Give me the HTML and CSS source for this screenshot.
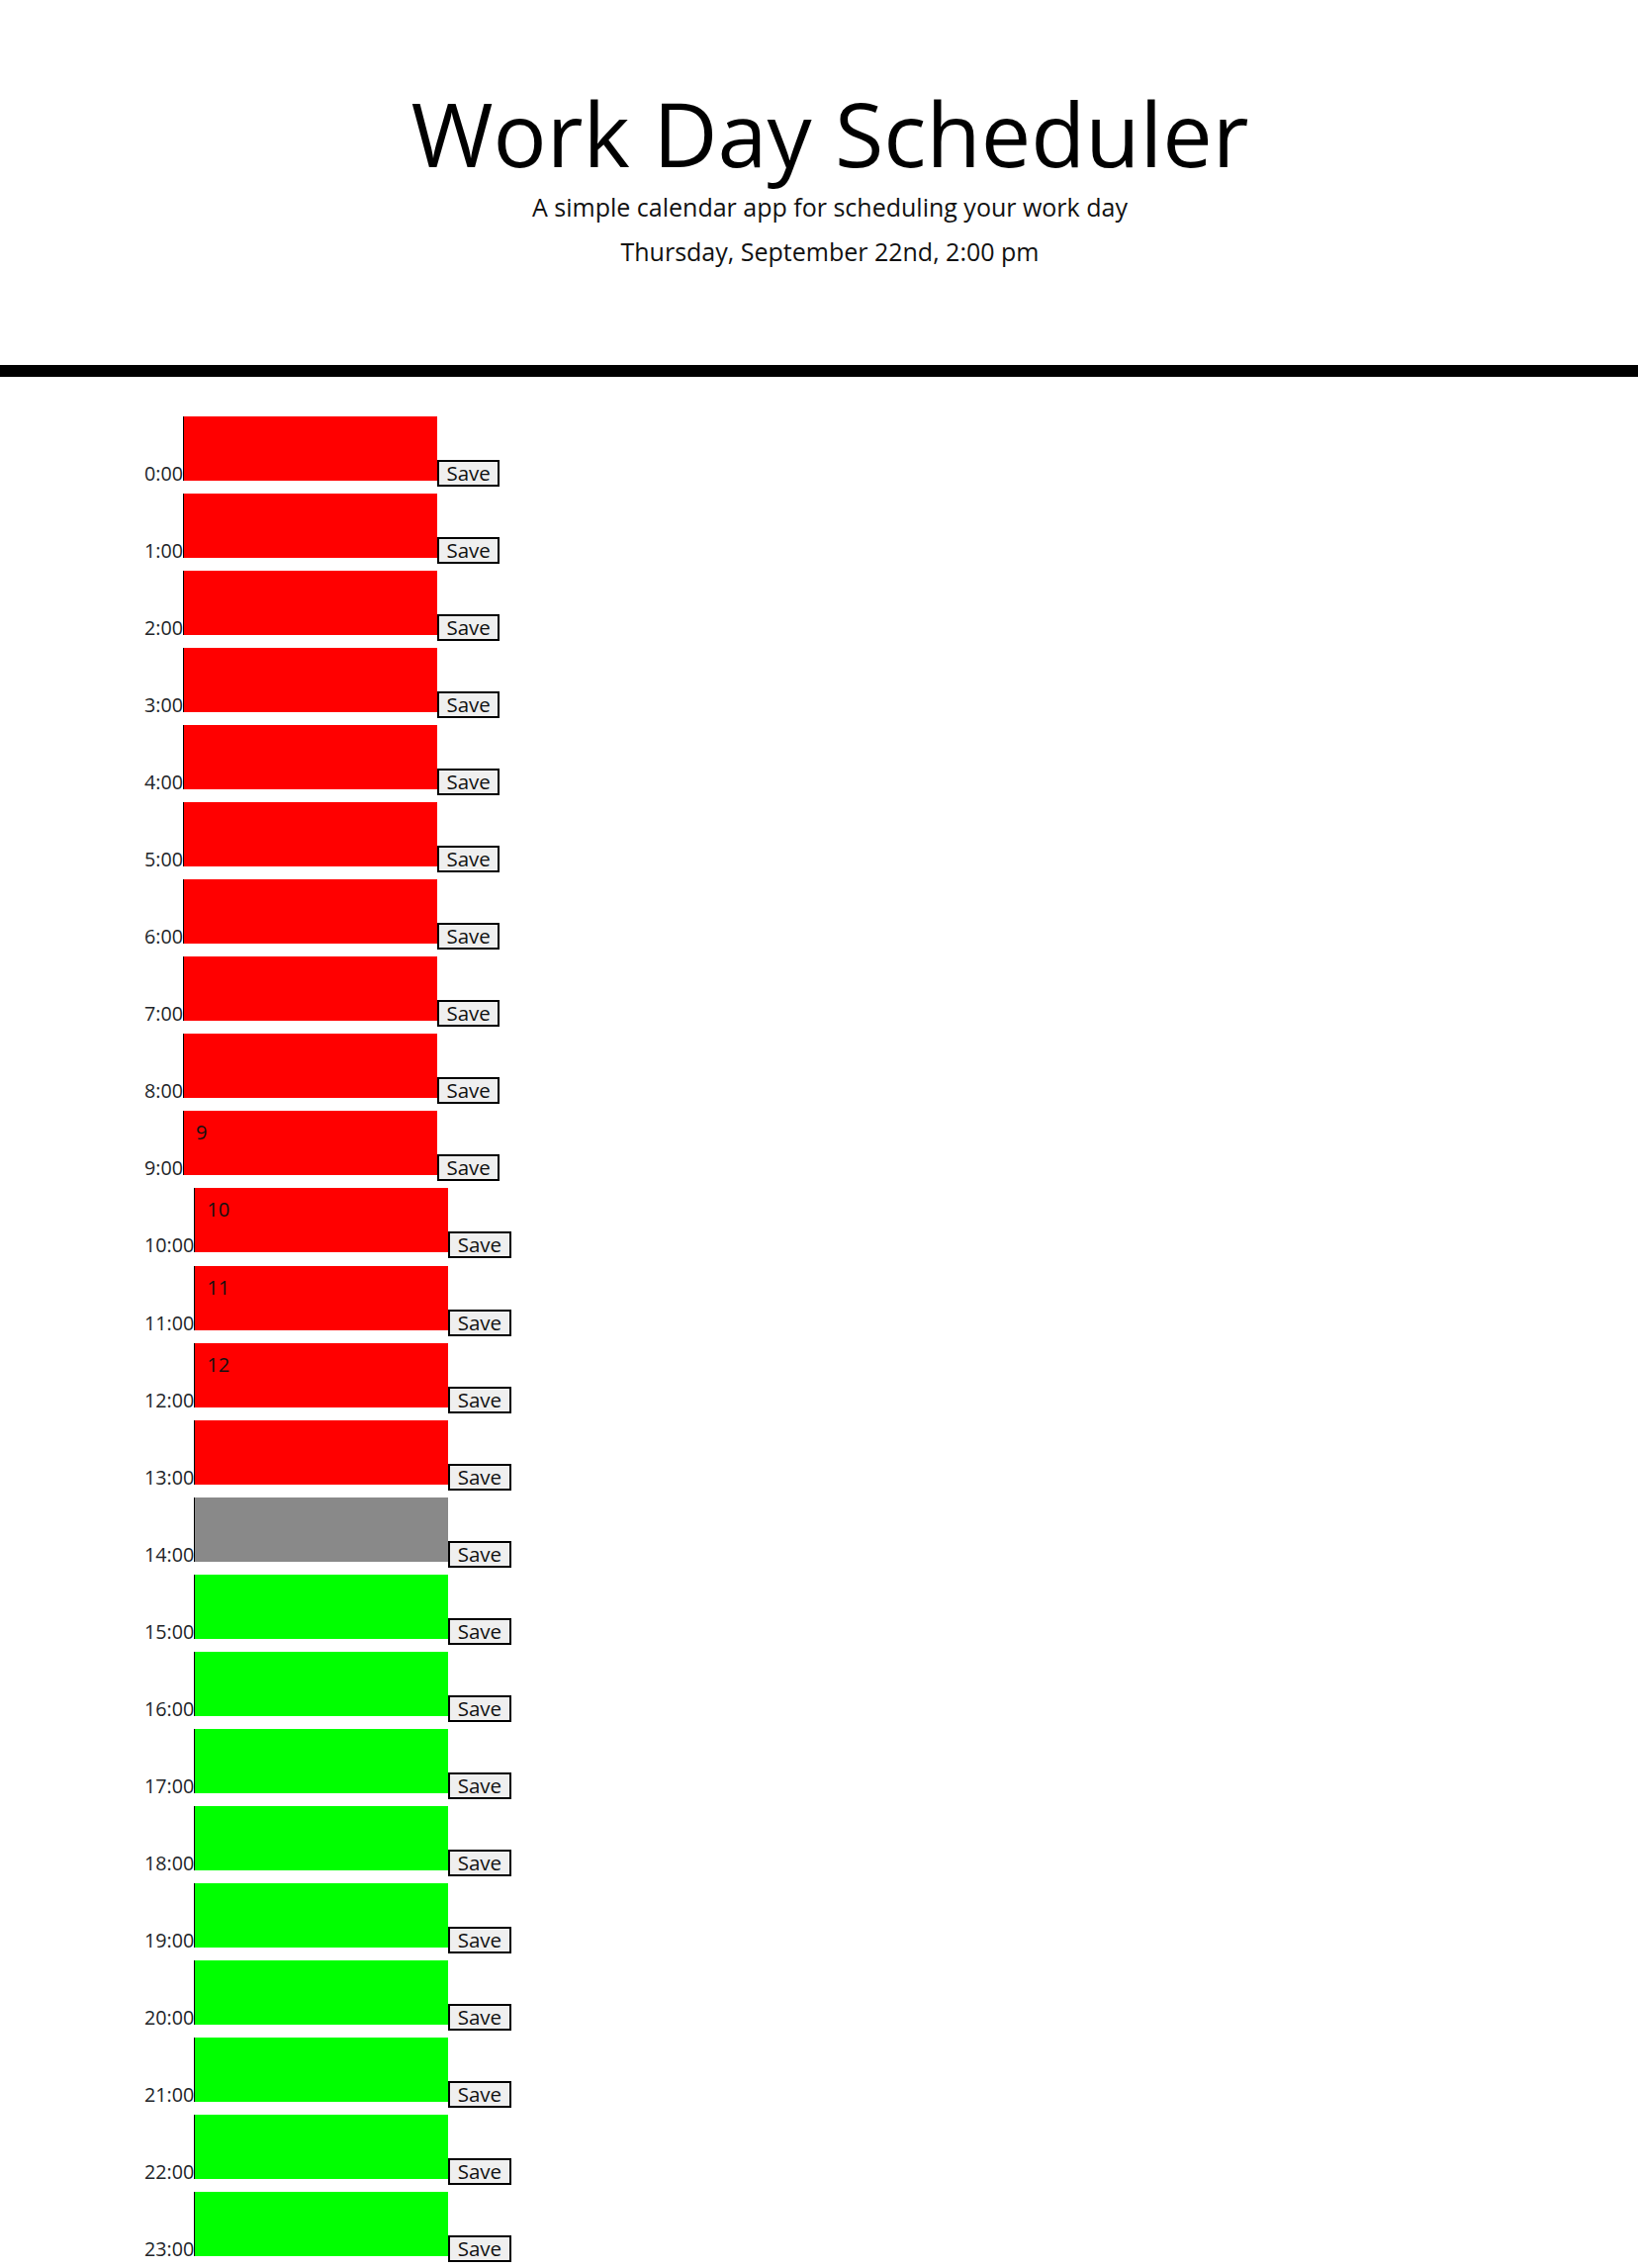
FILE: index.html
```html
<!DOCTYPE html>
<html lang="en">
<head>
<meta charset="utf-8">
<title>Work Day Scheduler</title>
<link rel="stylesheet" href="styles.css">
</head>
<body>
<header class="jumbo">
  <h1 class="title">Work Day Scheduler</h1>
  <p class="lead">A simple calendar app for scheduling your work day</p>
  <p class="today">Thursday, September 22nd, 2:00 pm</p>
</header>
<main class="hours">
  <div class="row"><span class="hour">0:00</span><textarea class="slot past"></textarea><button class="save">Save</button></div>
  <div class="row"><span class="hour">1:00</span><textarea class="slot past"></textarea><button class="save">Save</button></div>
  <div class="row"><span class="hour">2:00</span><textarea class="slot past"></textarea><button class="save">Save</button></div>
  <div class="row"><span class="hour">3:00</span><textarea class="slot past"></textarea><button class="save">Save</button></div>
  <div class="row"><span class="hour">4:00</span><textarea class="slot past"></textarea><button class="save">Save</button></div>
  <div class="row"><span class="hour">5:00</span><textarea class="slot past"></textarea><button class="save">Save</button></div>
  <div class="row"><span class="hour">6:00</span><textarea class="slot past"></textarea><button class="save">Save</button></div>
  <div class="row"><span class="hour">7:00</span><textarea class="slot past"></textarea><button class="save">Save</button></div>
  <div class="row"><span class="hour">8:00</span><textarea class="slot past"></textarea><button class="save">Save</button></div>
  <div class="row"><span class="hour">9:00</span><textarea class="slot past">9</textarea><button class="save">Save</button></div>
  <div class="row"><span class="hour">10:00</span><textarea class="slot past">10</textarea><button class="save">Save</button></div>
  <div class="row"><span class="hour">11:00</span><textarea class="slot past">11</textarea><button class="save">Save</button></div>
  <div class="row"><span class="hour">12:00</span><textarea class="slot past">12</textarea><button class="save">Save</button></div>
  <div class="row"><span class="hour">13:00</span><textarea class="slot past"></textarea><button class="save">Save</button></div>
  <div class="row"><span class="hour">14:00</span><textarea class="slot present"></textarea><button class="save">Save</button></div>
  <div class="row"><span class="hour">15:00</span><textarea class="slot future"></textarea><button class="save">Save</button></div>
  <div class="row"><span class="hour">16:00</span><textarea class="slot future"></textarea><button class="save">Save</button></div>
  <div class="row"><span class="hour">17:00</span><textarea class="slot future"></textarea><button class="save">Save</button></div>
  <div class="row"><span class="hour">18:00</span><textarea class="slot future"></textarea><button class="save">Save</button></div>
  <div class="row"><span class="hour">19:00</span><textarea class="slot future"></textarea><button class="save">Save</button></div>
  <div class="row"><span class="hour">20:00</span><textarea class="slot future"></textarea><button class="save">Save</button></div>
  <div class="row"><span class="hour">21:00</span><textarea class="slot future"></textarea><button class="save">Save</button></div>
  <div class="row"><span class="hour">22:00</span><textarea class="slot future"></textarea><button class="save">Save</button></div>
  <div class="row"><span class="hour">23:00</span><textarea class="slot future"></textarea><button class="save">Save</button></div>
</main>
</body>
</html>
```

FILE: styles.css
```css
html, body {
  margin: 0;
  padding: 0;
  background: #fff;
}

body {
  font-family: "Open Sans", "DejaVu Sans", sans-serif;
  color: #212529;
}

.jumbo {
  text-align: center;
  padding: 79px 0 96.7px 22px;
  border-bottom: 12px solid #000;
}

.title {
  margin: 0;
  font-size: 90px;
  font-weight: 400;
  line-height: 110px;
  color: #000;
}

.lead {
  margin: 2.3px 0 0;
  font-size: 25px;
  line-height: 36px;
  color: #111;
}

.today {
  margin: 9px 0 0;
  font-size: 25px;
  line-height: 36px;
  color: #111;
}

.hours {
  padding: 40px 0 0 146px;
}

.row {
  font-size: 19.7px;
  line-height: 23px;
  margin-bottom: 7.06px;
  white-space: nowrap;
}

.hour {
  color: #212529;
}

.slot {
  box-sizing: border-box;
  width: 257px;
  height: 65px;
  margin: 0;
  padding: 8px 12px;
  border: none;
  border-left: 1px solid #000;
  font-family: "Open Sans", "DejaVu Sans", sans-serif;
  font-size: 20px;
  line-height: 27px;
  color: #111;
  resize: none;
  overflow: hidden;
  vertical-align: baseline;
  outline: none;
}

.past {
  background: #ff0000;
}

.present {
  background: #898989;
}

.future {
  background: #00ff00;
}

.save {
  margin: 0;
  padding: 0 7.5px;
  border: 2px solid #000;
  background: #efefef;
  font-family: "Open Sans", "DejaVu Sans", sans-serif;
  font-size: 20.5px;
  line-height: 23px;
  color: #111;
  vertical-align: baseline;
}
```
